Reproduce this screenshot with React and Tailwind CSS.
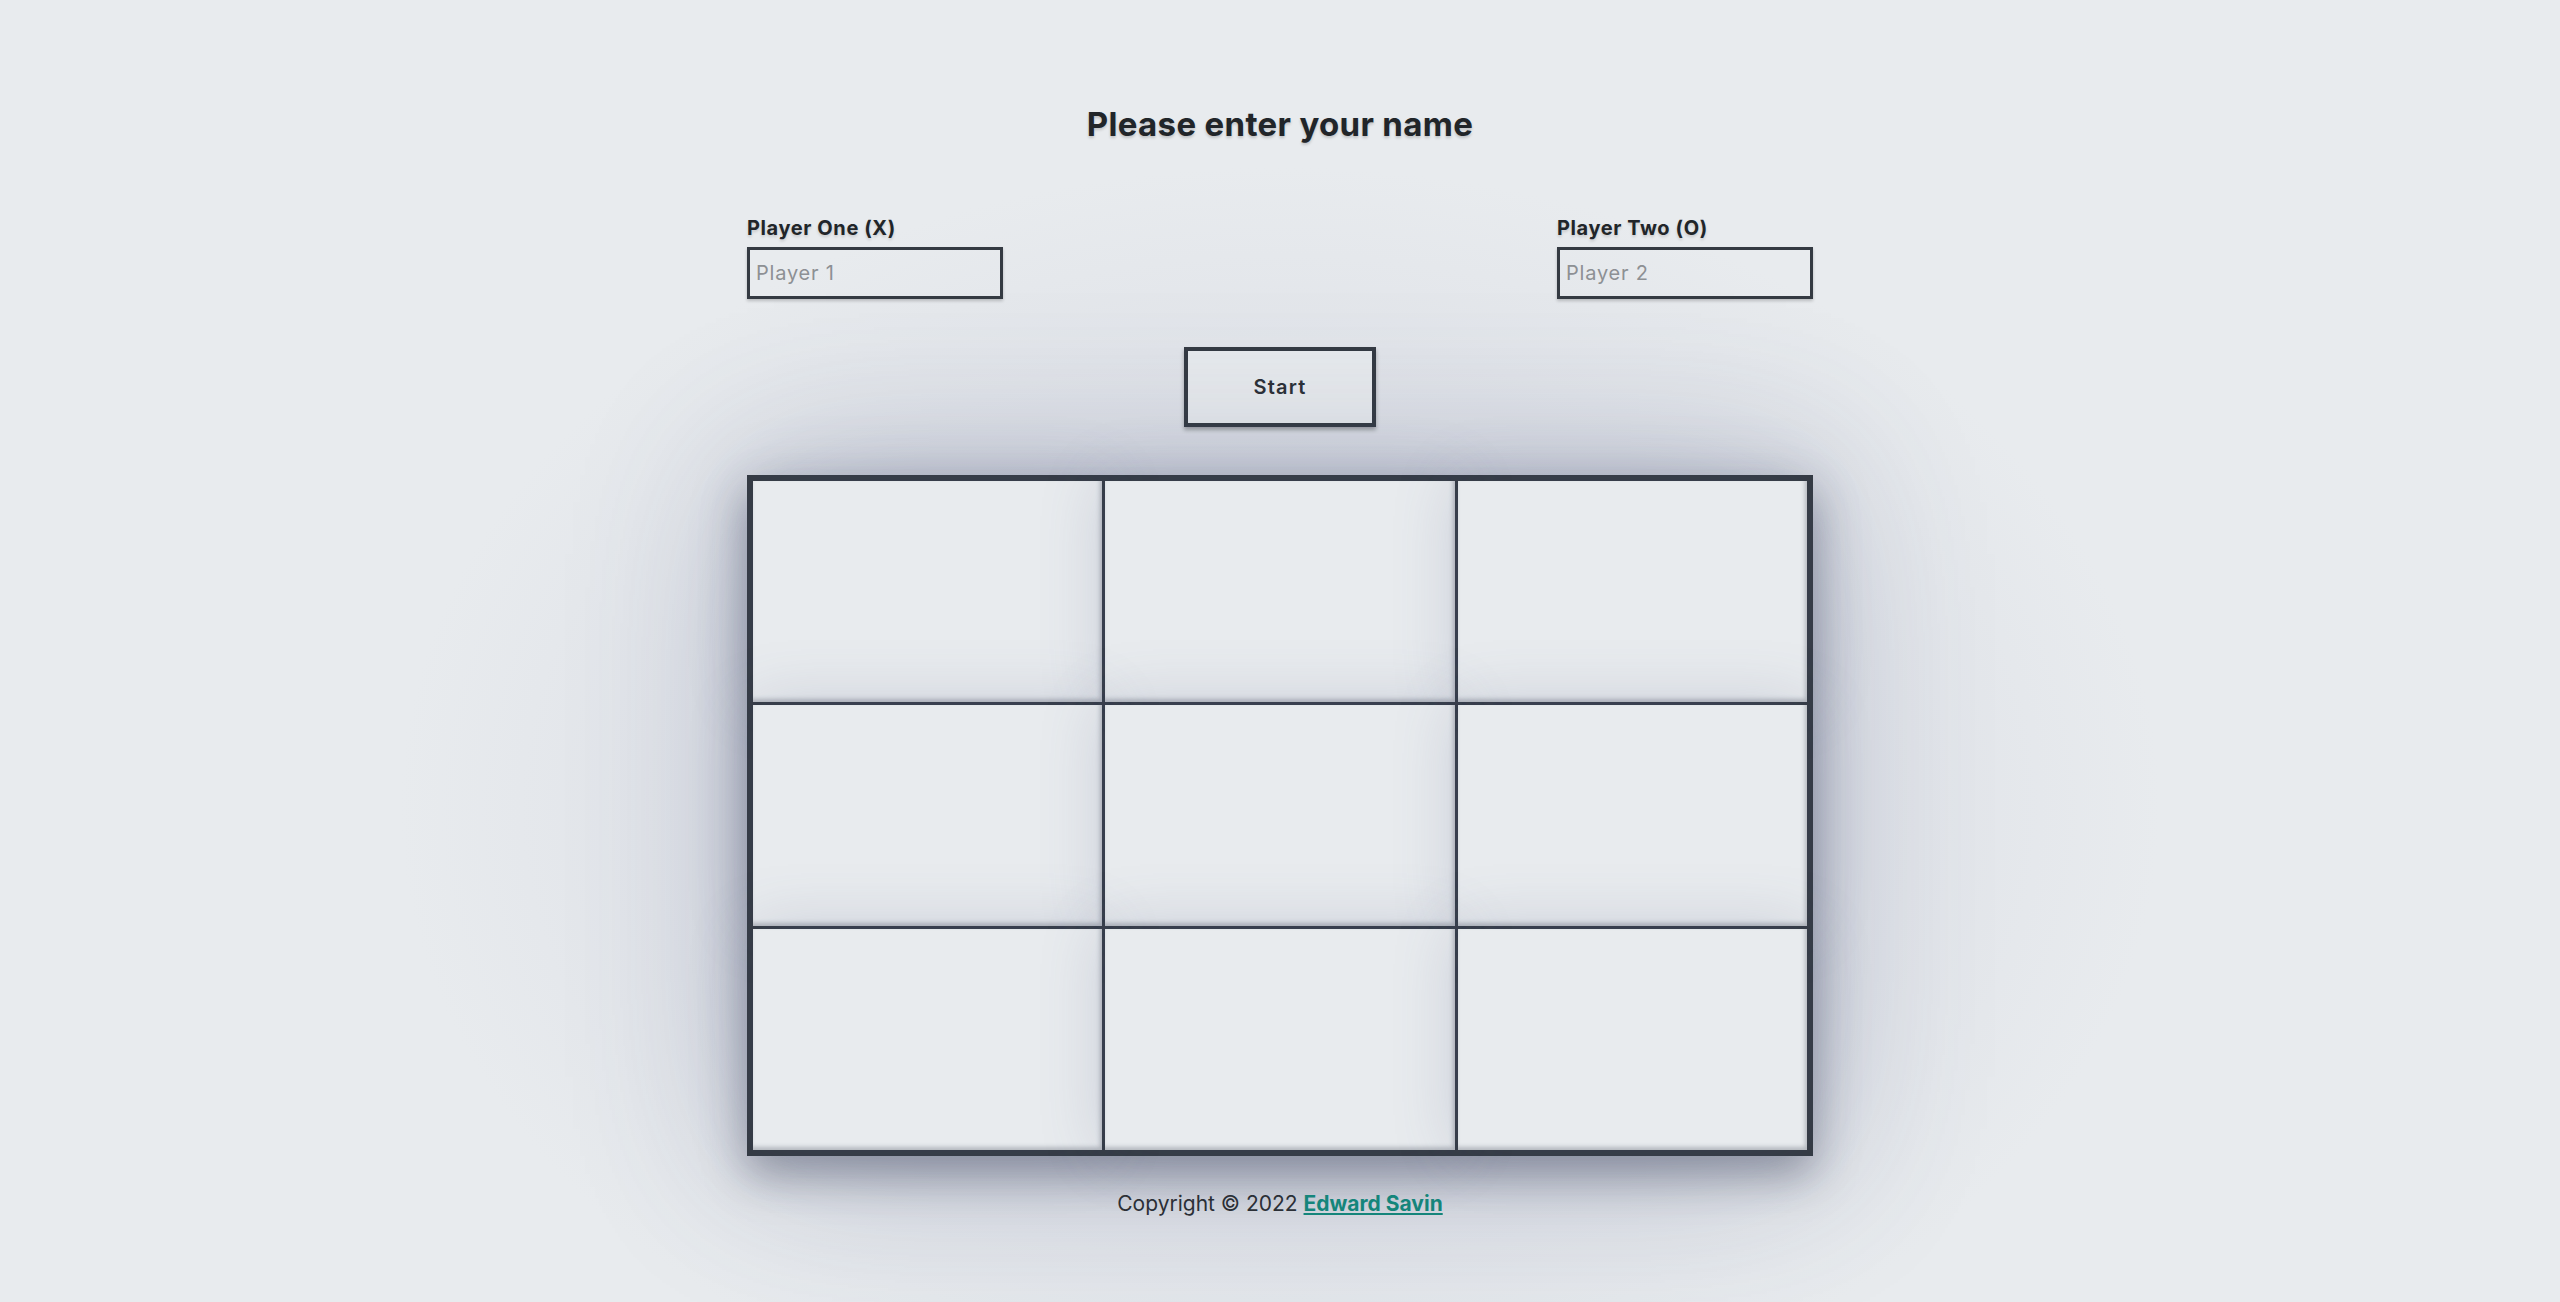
import { useState } from 'react';

const font = { fontFamily: 'Inter, "Noto Sans", sans-serif' };

const App = () => {
  const [names, setNames] = useState({ one: '', two: '' });
  const cells = Array.from({ length: 9 });

  return (
    <div style={font} className="min-h-screen bg-[#e8ebee] bg-[radial-gradient(ellipse_880px_640px_at_50%_62%,#d6d9e2_0%,#dcdfe6_45%,#e8ebee_100%)] text-[#212529]">
      <main className="w-[1066px] mx-auto pt-[100px]">
        <h1 className="text-center text-[33px] leading-[48px] font-bold tracking-[0.01em] [text-shadow:0_2px_3px_rgba(0,0,0,0.18)]">
          Please enter your name
        </h1>

        {/* Players */}
        <div className="mt-[68px] flex justify-between">
          <div>
            <label className="block text-[20px] leading-[24px] font-bold tracking-[0.03em] mb-[7px] [text-shadow:0_2px_3px_rgba(0,0,0,0.15)]">Player One (X)</label>
            <input type="text" placeholder="Player 1" value={names.one} onChange={(e) => setNames({ ...names, one: e.target.value })}
              className="w-[256px] h-[52px] border-[3px] border-[#343a42] bg-transparent px-[6px] text-[20px] tracking-[0.04em] text-[#212529] placeholder-[#8d9094] outline-none shadow-[0_2px_3px_rgba(0,0,0,0.2)]" />
          </div>
          <div>
            <label className="block text-[20px] leading-[24px] font-bold tracking-[0.03em] mb-[7px] [text-shadow:0_2px_3px_rgba(0,0,0,0.15)]">Player Two (O)</label>
            <input type="text" placeholder="Player 2" value={names.two} onChange={(e) => setNames({ ...names, two: e.target.value })}
              className="w-[256px] h-[52px] border-[3px] border-[#343a42] bg-transparent px-[6px] text-[20px] tracking-[0.04em] text-[#212529] placeholder-[#8d9094] outline-none shadow-[0_2px_3px_rgba(0,0,0,0.2)]" />
          </div>
        </div>

        <button className="block mx-auto mt-[48px] w-[192px] h-[80px] border-[4px] border-[#343a42] bg-[#e8ebee] text-[20px] font-semibold tracking-[0.06em] text-[#2b3038] shadow-[0_3px_4px_rgba(0,0,0,0.3)]">
          Start
        </button>

        {/* Board */}
        <div className="mt-[48px] h-[681px] border-[6px] border-[#343a42] bg-[#343a42] grid grid-cols-3 grid-rows-3 gap-[3px] shadow-[0_20px_40px_rgba(40,45,70,0.35),0_0_160px_rgba(70,80,120,0.3)]">
          {cells.map((_, i) => (
            <div key={i} className="bg-[#e8ebee] shadow-[inset_-2px_-3px_4px_rgba(60,65,80,0.3),0_0_60px_rgba(80,90,130,0.22)]" />
          ))}
        </div>

        <footer className="mt-[34px] pb-[40px] text-center text-[21px] leading-[28px] text-[#2b2f36]">
          Copyright © 2022 <a href="#" className="font-bold text-[#15857b] underline">Edward Savin</a>
        </footer>
      </main>
    </div>
  );
};

export default App;
